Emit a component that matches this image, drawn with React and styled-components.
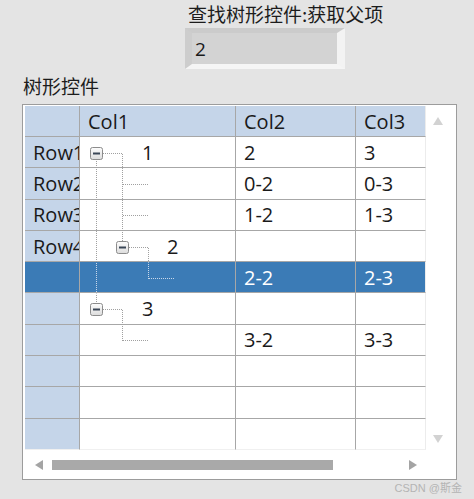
import React from "react";
import styled, { createGlobalStyle } from "styled-components";

const COLS = "55px 156px 120px 70px";
const HEAD_H = 31;
const ROW_H = 31.3;
const SEL_INDEX = 4;

const rows = [
  { head: "Row1", level: 0, label: "1", c2: "2", c3: "3" },
  { head: "Row2", c2: "0-2", c3: "0-3" },
  { head: "Row3", c2: "1-2", c3: "1-3" },
  { head: "Row4", level: 1, label: "2" },
  { c2: "2-2", c3: "2-3" },
  { level: 0, label: "3" },
  { c2: "3-2", c3: "3-3" },
  {},
  {},
  {},
];

const GlobalStyle = createGlobalStyle`
  html, body {
    margin: 0;
    padding: 0;
    background: #e4e4e4;
  }
  body {
    font-family: "Noto Sans CJK SC", sans-serif;
  }
`;

const Page = styled.div`
  width: 474px;
  height: 499px;
  overflow: hidden;
  background: #e4e4e4;
  color: #1c1c1c;
`;

const Caption = styled.div`
  font-family: "Noto Sans CJK SC", sans-serif;
  font-size: 19px;
  line-height: 28px;
  padding-left: ${(p) => p.$indent}px;
  margin-top: ${(p) => p.$top || 0}px;
  white-space: nowrap;
`;

const NumBox = styled.div`
  box-sizing: border-box;
  margin: 0 0 0 185px;
  width: 160px;
  height: 41px;
  border-style: solid;
  border-width: 5px 8px 5px 7px;
  border-color: #cbcbcb #f3f3f3 #f5f5f5 #cdcdcd;
  background: #d3d3d3;
  display: flex;
  align-items: center;
  padding-left: 3px;
  font-family: "Open Sans", "Noto Sans CJK SC", sans-serif;
  font-size: 19px;
  color: #1a1a1a;
`;

const Frame = styled.div`
  box-sizing: border-box;
  margin: 4px 0 0 22px;
  width: 435px;
  height: 376px;
  border: 1px solid #9c9c9c;
  background: #ffffff;
  padding: 1px 0 0 2px;
  display: grid;
  grid-template-columns: 401px 1fr;
  grid-template-rows: 344px 1fr;
`;

const Table = styled.div`
  position: relative;
  font-family: "Open Sans", "Noto Sans CJK SC", sans-serif;
  font-size: 20px;
`;

const Row = styled.div`
  display: grid;
  grid-template-columns: ${COLS};
  height: ${(p) => p.$h}px;
`;

const Cell = styled.div`
  box-sizing: border-box;
  display: flex;
  align-items: center;
  padding-left: ${(p) => p.$pad ?? 8}px;
  white-space: nowrap;
  overflow: hidden;
  border-right: 1px solid ${(p) => (p.$lastCol ? "#ececec" : "#a7a7a7")};
  border-bottom: 1px solid ${(p) => (p.$lastRow ? "#f0f0f0" : "#a7a7a7")};
  background: ${(p) =>
    p.$selected ? "#3b7bb6" : p.$header ? "#c5d5e9" : "#ffffff"};
  color: ${(p) => (p.$selected ? "#ffffff" : "#1a1a1a")};
`;

const TreeLayer = styled.svg`
  position: absolute;
  left: 0;
  top: 0;
  pointer-events: none;
`;

const VScroll = styled.div`
  display: flex;
  flex-direction: column;
  justify-content: space-between;
  padding: 11px 0 7px 7px;
`;

const HScroll = styled.div`
  display: flex;
  align-items: center;
  padding: 0 9px 0 10px;
`;

const Thumb = styled.div`
  width: 281px;
  height: 10px;
  margin-left: 9px;
  background: #a9a9a9;
`;

const Spacer = styled.div`
  flex: 1;
`;

const Watermark = styled.div`
  text-align: right;
  padding-right: 12px;
  margin-top: 1px;
  font-family: "Liberation Sans", "Noto Sans CJK SC", sans-serif;
  font-size: 11px;
  line-height: 14px;
  color: #b4b4b4;
`;

const Arrow = ({ dir, color }) => {
  const shapes = {
    up: { w: 10, h: 8, pts: "5,0 10,8 0,8" },
    down: { w: 10, h: 8, pts: "0,0 10,0 5,8" },
    left: { w: 8, h: 10, pts: "8,0 8,10 0,5" },
    right: { w: 8, h: 10, pts: "0,0 8,5 0,10" },
  };
  const s = shapes[dir];
  return (
    <svg width={s.w} height={s.h} viewBox={`0 0 ${s.w} ${s.h}`}>
      <polygon points={s.pts} fill={color} />
    </svg>
  );
};

const center = (i) => HEAD_H + ROW_H * i + ROW_H / 2;

const ExpandBox = ({ x, y }) => (
  <g>
    <rect
      x={x + 0.5}
      y={y + 0.5}
      width={12}
      height={12}
      rx={2}
      fill="url(#boxfill)"
      stroke="#8c8c8c"
    />
    <rect x={x + 3} y={y + 5.5} width={7} height={2} fill="#3a4656" />
  </g>
);

const TreeLines = () => {
  const r0 = center(0);
  const r1 = center(1);
  const r2 = center(2);
  const r3 = center(3);
  const r4 = center(4);
  const r5 = center(5);
  const r6 = center(6);
  const lines = [
    [78, r0, 97.5, r0],
    [97.5, r0, 97.5, r3 - 6],
    [97.5, r1, 123, r1],
    [97.5, r2, 123, r2],
    [71.5, r0 + 7, 71.5, r5 - 6],
    [104, r3, 123.5, r3],
    [123.5, r3, 123.5, r4],
    [123.5, r4, 150, r4],
    [78, r5, 97.5, r5],
    [97.5, r5, 97.5, r6],
    [97.5, r6, 123, r6],
  ];
  const selTop = HEAD_H + ROW_H * SEL_INDEX;
  const draw = (color) =>
    lines.map(([x1, y1, x2, y2], i) => (
      <line
        key={i}
        x1={x1}
        y1={Math.round(y1) + 0.5}
        x2={x2}
        y2={Math.round(y2) + 0.5}
        stroke={color}
        strokeWidth={1}
        strokeDasharray="1 1"
        shapeRendering="crispEdges"
      />
    ));
  return (
    <TreeLayer width={401} height={344}>
      <defs>
        <linearGradient id="boxfill" x1="0" y1="0" x2="0" y2="1">
          <stop offset="0" stopColor="#fdfdfd" />
          <stop offset="1" stopColor="#dcdcdc" />
        </linearGradient>
        <clipPath id="outsideSel">
          <rect x={0} y={0} width={401} height={selTop} />
          <rect x={0} y={selTop + ROW_H} width={401} height={344} />
        </clipPath>
        <clipPath id="insideSel">
          <rect x={0} y={selTop} width={401} height={ROW_H} />
        </clipPath>
      </defs>
      <g clipPath="url(#outsideSel)">{draw("#a0a0a0")}</g>
      <g clipPath="url(#insideSel)">{draw("#c9d8ea")}</g>
      <ExpandBox x={65} y={Math.round(r0) - 6} />
      <ExpandBox x={91} y={Math.round(r3) - 6} />
      <ExpandBox x={65} y={Math.round(r5) - 6} />
    </TreeLayer>
  );
};

const treePad = (level) => (level === 1 ? 87 : 62);

export default function App() {
  return (
    <Page>
      <GlobalStyle />
      <Caption $indent={188}>查找树形控件:获取父项</Caption>
      <NumBox>2</NumBox>
      <Caption $indent={23} $top={3}>
        树形控件
      </Caption>
      <Frame>
        <Table>
          <Row $h={HEAD_H}>
            <Cell $header />
            <Cell $header>Col1</Cell>
            <Cell $header>Col2</Cell>
            <Cell $header $lastCol>
              Col3
            </Cell>
          </Row>
          {rows.map((r, i) => {
            const sel = i === SEL_INDEX;
            const last = i === rows.length - 1;
            return (
              <Row key={i} $h={ROW_H}>
                <Cell $header={!sel} $selected={sel} $lastRow={last}>
                  {r.head}
                </Cell>
                <Cell
                  $selected={sel}
                  $lastRow={last}
                  $pad={r.label ? treePad(r.level) : 8}
                >
                  {r.label}
                </Cell>
                <Cell $selected={sel} $lastRow={last}>
                  {r.c2}
                </Cell>
                <Cell $selected={sel} $lastRow={last} $lastCol>
                  {r.c3}
                </Cell>
              </Row>
            );
          })}
          <TreeLines />
        </Table>
        <VScroll>
          <Arrow dir="up" color="#d2d2d2" />
          <Arrow dir="down" color="#d2d2d2" />
        </VScroll>
        <HScroll>
          <Arrow dir="left" color="#a4a4a4" />
          <Thumb />
          <Spacer />
          <Arrow dir="right" color="#a4a4a4" />
        </HScroll>
      </Frame>
      <Watermark>CSDN @斯金</Watermark>
    </Page>
  );
}
